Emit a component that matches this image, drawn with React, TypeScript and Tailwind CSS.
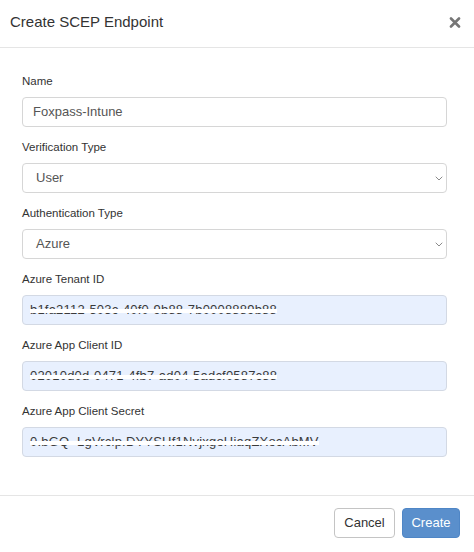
import React from 'react'

type Field =
    | {label: string; kind: 'text'; value: string}
    | {label: string; kind: 'select'; value: string}
    | {label: string; kind: 'redacted'; value: string}

const fields: Field[] = [
    {label: 'Name', kind: 'text', value: 'Foxpass-Intune'},
    {label: 'Verification Type', kind: 'select', value: 'User'},
    {label: 'Authentication Type', kind: 'select', value: 'Azure'},
    {label: 'Azure Tenant ID', kind: 'redacted', value: 'b1fa2112-503c-40f0-9b88-7b0008889b88'},
    {label: 'Azure App Client ID', kind: 'redacted', value: '02010d0d-0471-4fb7-ad04-5adcf0587c88'},
    {label: 'Azure App Client Secret', kind: 'redacted', value: '0.bGQ~LgVrclp.DYYSHf1NvjxgoHiaqZXocAbMV'},
]

function Chevron() {
    return (
        <svg width="8" height="5" viewBox="0 0 8 5" fill="none" className="shrink-0">
            <path d="M1 1l3 3 3-3" stroke="#8a8a8a" strokeWidth="1" strokeLinecap="round" strokeLinejoin="round" />
        </svg>
    )
}

function FieldControl({field}: {field: Field}) {
    if (field.kind === 'select') {
        return (
            <div className="h-[30px] flex items-center justify-between rounded-[4px] border border-[#d6d6d6] bg-white pl-[13px] pr-[3px] text-[13px] text-[#555]">
                <span>{field.value}</span>
                <Chevron />
            </div>
        )
    }

    if (field.kind === 'redacted') {
        return (
            <div className="h-[30px] flex items-center rounded-[4px] border border-[#d3d9e4] bg-[#e8f0fe] pl-[7px] text-[13px] text-[#3a3a3a]">
                <span className="relative tracking-[0.2px]">
                    {field.value}
                    <span className="absolute left-0 right-0 top-[9px] h-[4px] bg-white" />
                </span>
            </div>
        )
    }

    return (
        <div className="h-[30px] flex items-center rounded-[4px] border border-[#d6d6d6] bg-white pl-[10px] text-[13px] text-[#555]">
            {field.value}
        </div>
    )
}

export default function App() {
    return (
        <div className="w-[474px] h-[552px] bg-white flex flex-col font-['Liberation_Sans',Arial,sans-serif]">
            <div className="h-[48px] shrink-0 flex items-center justify-between border-b border-[#e5e5e5] pl-[10px] pr-[13px] pb-[3px]">
                <h2 className="text-[15px] text-[#333]">Create SCEP Endpoint</h2>
                <svg width="12" height="11" viewBox="0 0 12 11" className="mr-[0px]">
                    <path d="M2 1.5l8 8M10 1.5l-8 8" stroke="#767676" strokeWidth="2.6" strokeLinecap="round" />
                </svg>
            </div>

            <div className="flex-1 pl-[22px] pr-[27px] pt-[25px]">
                <div className="flex flex-col gap-[12px]">
                    {fields.map((field) => (
                        <div key={field.label} className="flex flex-col gap-[8px]">
                            <label className="h-[16px] leading-[16px] text-[11.5px] text-[#333]">{field.label}</label>
                            <FieldControl field={field} />
                        </div>
                    ))}
                </div>
            </div>

            <div className="h-[57px] shrink-0 border-t border-[#e5e5e5] flex items-start justify-end gap-[7px] pt-[12px] pr-[14px]">
                <button className="h-[30px] w-[61px] rounded-[4px] border border-[#c4c4c4] bg-white text-[13px] text-[#333]">
                    Cancel
                </button>
                <button className="h-[30px] w-[58px] rounded-[4px] border border-[#4f86c6] bg-[#5a8fcc] text-[13px] text-white">
                    Create
                </button>
            </div>
        </div>
    )
}
